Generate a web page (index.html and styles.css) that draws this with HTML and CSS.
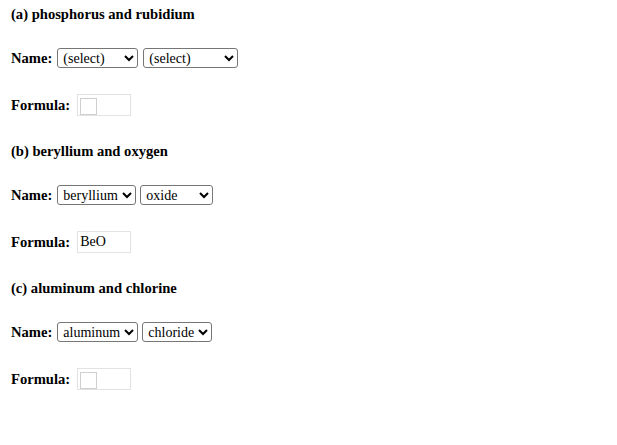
FILE: index.html
```html
<!DOCTYPE html>
<html lang="en">
<head>
  <meta charset="UTF-8">
  <title>Naming Ionic Compounds</title>
  <link rel="stylesheet" href="styles.css">
</head>
<body>
  <div class="question">
    <h3>(a) phosphorus and rubidium</h3>
    <p class="row names">
      <label>Name:</label>
      <select class="sel w81"><option>(select)</option></select>
      <select class="sel w95 wide-gap"><option>(select)</option></select>
    </p>
    <p class="row formula-row">
      <label>Formula:</label>
      <span class="formula"><span class="slot"></span></span>
    </p>
  </div>

  <div class="question">
    <h3>(b) beryllium and oxygen</h3>
    <p class="row names">
      <label>Name:</label>
      <select class="sel w79"><option>beryllium</option></select>
      <select class="sel w73"><option>oxide</option></select>
    </p>
    <p class="row formula-row">
      <label>Formula:</label>
      <span class="formula">BeO</span>
    </p>
  </div>

  <div class="question">
    <h3>(c) aluminum and chlorine</h3>
    <p class="row names">
      <label>Name:</label>
      <select class="sel w81"><option>aluminum</option></select>
      <select class="sel w70"><option>chloride</option></select>
    </p>
    <p class="row formula-row">
      <label>Formula:</label>
      <span class="formula"><span class="slot"></span></span>
    </p>
  </div>
</body>
</html>
```

FILE: styles.css
```css
body {
  margin: 0;
  padding: 0 11px;
  font-family: "Liberation Serif", "Times New Roman", serif;
  font-size: 14.6px;
  color: #000;
  background: #fff;
}
.question {
  padding-top: 4px;
}
.question + .question {
  padding-top: 25px;
}
h3 {
  font-size: 14.6px;
  font-weight: 700;
  margin: 0;
  height: 20px;
  line-height: 20px;
}
.row {
  display: flex;
  align-items: center;
  gap: 4px;
  margin: 0;
}
.names {
  height: 20px;
  margin-top: 24px;
}
.formula-row {
  height: 22px;
  margin-top: 26px;
}
.row label {
  font-weight: 700;
  margin-right: 1px;
}
.formula-row label {
  margin-right: 3px;
}
.sel {
  font-family: "Liberation Serif", "Times New Roman", serif;
  font-size: 14px;
  height: 20px;
  padding: 0 0 0 1px;
  border: 1px solid #767676;
  border-radius: 3px;
  background: #fff;
  color: #000;
}
.wide-gap { margin-left: 1px; }
.w70 { width: 70px; }
.w73 { width: 73px; }
.w79 { width: 79px; }
.w81 { width: 81px; }
.w95 { width: 95px; }
.formula {
  display: inline-flex;
  align-items: flex-end;
  box-sizing: border-box;
  width: 54px;
  height: 22px;
  padding: 0 2px;
  border: 1px solid #e2e2e2;
  font-size: 14px;
  line-height: 20px;
}
.slot {
  display: block;
  width: 17px;
  height: 17px;
  box-sizing: border-box;
  border: 1px solid #cfcfcf;
}
```
